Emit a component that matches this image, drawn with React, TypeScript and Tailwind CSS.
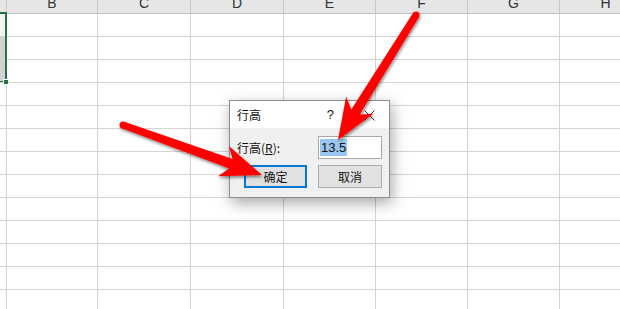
const COLS = [
  { label: "", w: 7 },
  { label: "B", w: 91 },
  { label: "C", w: 93 },
  { label: "D", w: 93 },
  { label: "E", w: 92 },
  { label: "F", w: 92 },
  { label: "G", w: 92 },
  { label: "H", w: 92 },
];

const ROWS = Array.from({ length: 13 }, (_, i) => i);

const CJK = "font-['Microsoft_YaHei','Noto_Sans_CJK_SC',sans-serif]";

function rowHeadBg(i: number) {
  if (i === 0) return "bg-[#f3f3f3]";
  if (i === 1 || i === 2) return "bg-[#d2d2d2]";
  return "bg-white";
}

function Sheet() {
  return (
    <div className="flex flex-col">
      <div className="flex h-[14px] bg-[#e6e6e6] border-b border-[#bfbfbf] overflow-hidden">
        {COLS.map((c, i) => (
          <div
            key={i}
            style={{ width: c.w }}
            className="shrink-0 border-r border-[#c8c8c8] flex justify-center"
          >
            <span className="mt-[-4px] text-[14px] leading-[14px] text-[#333] font-['Liberation_Sans',Arial,sans-serif]">
              {c.label}
            </span>
          </div>
        ))}
      </div>
      {ROWS.map((r) => (
        <div key={r} className="flex h-[23px] shrink-0">
          {COLS.map((c, i) => (
            <div
              key={i}
              style={{ width: c.w }}
              className={
                "shrink-0 border-r border-b border-[#d4d4d4] " +
                (i === 0 ? rowHeadBg(r) : "bg-white")
              }
            />
          ))}
        </div>
      ))}
    </div>
  );
}

function Selection() {
  return (
    <>
      <div className="absolute left-0 top-[12px] w-[7px] h-[2px] bg-[#217346]" />
      <div className="absolute left-[5px] top-[12px] w-[2px] h-[71px] bg-[#217346]" />
      <div className="absolute left-0 top-[81px] w-[4px] h-[1px] bg-[#217346]" />
      <div className="absolute left-[3px] top-[79px] w-[6px] h-[6px] bg-[#217346] border border-white" />
    </>
  );
}

function Dialog() {
  return (
    <div className="absolute left-[229px] top-[100px] w-[161px] border border-[#8c8c8c] bg-[#f0f0f0] shadow-[2px_5px_14px_rgba(0,0,0,0.35)]">
      <div className="h-[27px] bg-white flex items-center pl-[7px] pr-[14px] text-[12px] text-[#111]">
        <span className={CJK}>行高</span>
        <span className="ml-auto mr-[30px] text-[13px] font-['Liberation_Sans',Arial,sans-serif]">?</span>
        <svg width="11" height="11" viewBox="0 0 11 11" className="mt-[1px]">
          <path d="M0.5 0.5 L10.5 10.5 M10.5 0.5 L0.5 10.5" stroke="#333" strokeWidth="1" fill="none" />
        </svg>
      </div>
      <div className="pt-[8px] pb-[9px] pl-[7px]">
        <div className="flex items-center h-[23px]">
          <span className={"w-[81px] text-[12px] text-[#111] " + CJK}>
            行高(<span className="underline">R</span>):
          </span>
          <div className="w-[64px] h-[23px] bg-white border border-[#a9a9a9] flex items-center pl-[1px]">
            <span className="bg-[#99c6ee] text-[#111] text-[13px] leading-[17px] px-[1px] font-['Liberation_Sans',Arial,sans-serif]">
              13.5
            </span>
          </div>
        </div>
        <div className="flex mt-[6px] pl-[7px] gap-[11px]">
          <div className={"w-[63px] h-[23px] bg-[#e1e1e1] border-2 border-[#0078d7] flex items-center justify-center text-[12px] text-[#111] " + CJK}>
            确定
          </div>
          <div className={"w-[64px] h-[23px] bg-[#e1e1e1] border border-[#adadad] flex items-center justify-center text-[12px] text-[#111] " + CJK}>
            取消
          </div>
        </div>
      </div>
    </div>
  );
}

function Arrows() {
  return (
    <svg className="absolute left-0 top-0 pointer-events-none" width="620" height="309" viewBox="0 0 620 309">
      <defs>
        <filter id="sh" x="-20%" y="-20%" width="140%" height="140%">
          <feDropShadow dx="1" dy="2" stdDeviation="1.5" floodColor="#000" floodOpacity="0.45" />
        </filter>
      </defs>
      <g fill="#ff0000" filter="url(#sh)">
        <polygon points="121.8,128.3 229.2,168.5 218,176.2 262,175 228.8,146 232.6,159.1 124.2,121.7" />
        <circle cx="123" cy="125" r="3.5" />
      </g>
      <g fill="#ff0000" filter="url(#sh)">
        <polygon points="419,16.9 359.7,114.6 373.3,113.7 338,140 346.1,96.7 351.3,109.4 413,13.1" />
        <circle cx="416" cy="15" r="3.5" />
      </g>
    </svg>
  );
}

export default function App() {
  return (
    <div className="relative w-[620px] h-[309px] overflow-hidden bg-white">
      <Sheet />
      <Selection />
      <Dialog />
      <Arrows />
    </div>
  );
}
